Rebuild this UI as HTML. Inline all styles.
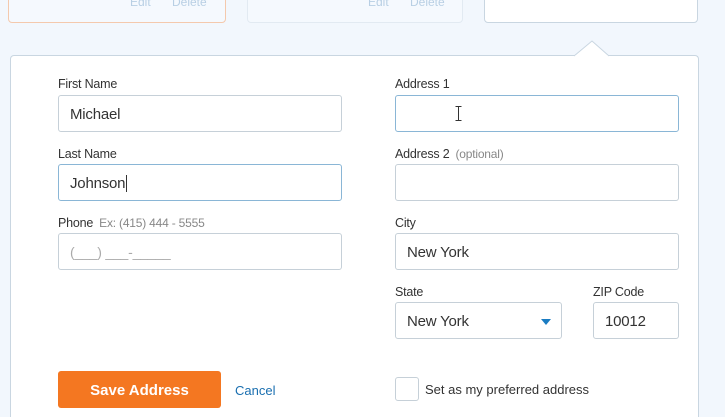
<!DOCTYPE html>
<html style="width:725px;height:417px;overflow:hidden"><head><style>
*{box-sizing:border-box;margin:0;padding:0}
body{width:725px;height:417px;overflow:hidden;background:#f2f7fd;font-family:"Liberation Sans",sans-serif;position:relative;color:#333}
.abs{position:absolute}
.card{position:absolute;top:-10px;height:33px;border-radius:4px;background:#f5f9fe;border:1px solid #e2eaf2}
.card span{position:absolute;top:4px;font-size:12px;color:#b8cfe4}
.panel{position:absolute;left:10px;top:55px;width:689px;height:362px;background:#fff;border:1px solid #c9d6e1;border-bottom:none;border-radius:4px 4px 0 0}
.lbl{position:absolute;font-size:12.5px;color:#333;letter-spacing:-0.2px}
.lbl i{font-style:normal;color:#888;font-size:12px;margin-left:6px}
.inp{position:absolute;height:37px;border:1px solid #c6d0d8;border-radius:3px;background:#fff;font-size:15px;color:#333;padding:10px 0 0 11px;letter-spacing:-0.2px}
.focus{border-color:#8ab6d6}
</style></head><body>
<div class="card" style="left:8px;width:218px;border-color:#f4c9ad"><span style="left:121px">Edit</span><span style="left:163px">Delete</span></div>
<div class="card" style="left:247px;width:216px"><span style="left:120px">Edit</span><span style="left:162px">Delete</span></div>
<div class="card" style="left:484px;width:214px;background:#fff;border-color:#c9d6e1"></div>
<div class="panel"></div>
<svg class="abs" style="left:574px;top:40px" width="36" height="17"><path d="M0 16 L18 1 L35 16" fill="#fff" stroke="#c9d6e1"/><rect x="1" y="15.5" width="33" height="2" fill="#fff"/></svg>

<div class="lbl" style="left:58px;top:77px">First Name</div>
<div class="inp" style="left:58px;top:95px;width:284px">Michael</div>
<div class="lbl" style="left:58px;top:147px">Last Name</div>
<div class="inp focus" style="left:58px;top:164px;width:284px">Johnson<span style="border-left:1px solid #333;margin-left:1px"></span></div>
<div class="lbl" style="left:58px;top:216px">Phone<i>Ex: (415) 444 - 5555</i></div>
<div class="inp" style="left:58px;top:233px;width:284px;color:#aaa;font-size:14px">(___) ___-_____</div>

<div class="lbl" style="left:395px;top:77px">Address 1</div>
<div class="inp focus" style="left:395px;top:95px;width:284px"><svg class="abs" style="left:59px;top:10px" width="7" height="15"><path d="M0.5 0.5H6.5M3.5 0.5V14.5M0.5 14.5H6.5" stroke="#333" fill="none"/></svg></div>
<div class="lbl" style="left:395px;top:147px">Address 2<i>(optional)</i></div>
<div class="inp" style="left:395px;top:164px;width:284px"></div>
<div class="lbl" style="left:395px;top:216px">City</div>
<div class="inp" style="left:395px;top:233px;width:284px">New York</div>
<div class="lbl" style="left:395px;top:285px">State</div>
<div class="inp" style="left:395px;top:302px;width:167px">New York<svg class="abs" style="left:145px;top:16px" width="10" height="6"><path d="M0 0H10L5 6Z" fill="#1a7cc2"/></svg></div>
<div class="lbl" style="left:593px;top:285px">ZIP Code</div>
<div class="inp" style="left:593px;top:302px;width:86px">10012</div>

<div class="abs" style="left:58px;top:371px;width:163px;height:37px;background:#f47721;border-radius:3px;color:#fff;font-weight:bold;font-size:15px;text-align:center;line-height:39px">Save Address</div>
<div class="abs" style="left:235px;top:383px;font-size:13px;color:#1a6fb0">Cancel</div>
<div class="abs" style="left:395px;top:377px;width:24px;height:24px;border:1px solid #c6d0d8;border-radius:3px"></div>
<div class="abs" style="left:425px;top:382px;font-size:13px;color:#333">Set as my preferred address</div>
</body></html>
